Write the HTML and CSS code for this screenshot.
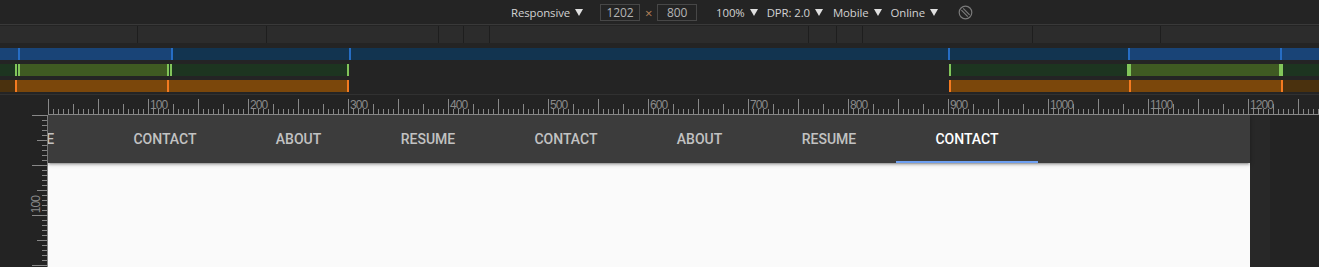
FILE: index.html
```html
<!DOCTYPE html>
<html>
<head>
<meta charset="utf-8">
<title>Device mode</title>
<link rel="stylesheet" href="styles.css">
</head>
<body>
<div class="devbar">
  <div class="toolbar">
    <span class="tb-item tb-responsive">Responsive<span class="caret"></span></span>
    <span class="dims">
      <span class="dim-box">1202</span>
      <span class="times">×</span>
      <span class="dim-box">800</span>
    </span>
    <span class="tb-item tb-zoom">100%<span class="caret"></span></span>
    <span class="tb-item tb-dpr">DPR: 2.0<span class="caret"></span></span>
    <span class="tb-item tb-mobile">Mobile<span class="caret"></span></span>
    <span class="tb-item tb-online">Online<span class="caret"></span></span>
    <svg class="rotate" width="15" height="15" viewBox="0 0 15 15">
      <circle cx="7.5" cy="7.5" r="6.3" fill="none" stroke="#7a7a7a" stroke-width="1.2"/>
      <path d="M3.4 5.2 L9.8 11.6 M5.2 3.4 L11.6 9.8" stroke="#7a7a7a" stroke-width="1.2" fill="none"/>
    </svg>
  </div>
  <div class="presets">
    <div class="preset" style="width:137px"></div>
    <div class="preset" style="width:128px"></div>
    <div class="preset" style="width:171px"></div>
    <div class="preset" style="width:24px"></div>
    <div class="preset" style="width:25px"></div>
    <div class="preset" style="width:318px"></div>
    <div class="preset" style="width:27px"></div>
    <div class="preset" style="width:25px"></div>
    <div class="preset" style="width:169px"></div>
    <div class="preset" style="width:127px"></div>
    <div class="preset preset-last"></div>
  </div>
  <div class="mq mq-max">
    <div class="s bl" style="width:18px"></div>
    <div class="s bt" style="width:2px"></div>
    <div class="s bl" style="width:151px"></div>
    <div class="s bt" style="width:2px"></div>
    <div class="s bd" style="width:176px"></div>
    <div class="s bt" style="width:2px"></div>
    <div class="s bd" style="width:597px"></div>
    <div class="s bt" style="width:2px"></div>
    <div class="s bd" style="width:178px"></div>
    <div class="s bt" style="width:2px"></div>
    <div class="s bl" style="width:150px"></div>
    <div class="s bt" style="width:2px"></div>
    <div class="s bl rest"></div>
  </div>
  <div class="mq mq-minmax">
    <div class="s gd" style="width:15px"></div>
    <div class="s gt" style="width:2px"></div>
    <div class="s gd" style="width:1px"></div>
    <div class="s gt" style="width:2px"></div>
    <div class="s gl" style="width:147px"></div>
    <div class="s gt" style="width:2px"></div>
    <div class="s gd" style="width:1px"></div>
    <div class="s gt" style="width:2px"></div>
    <div class="s gd" style="width:175px"></div>
    <div class="s gt" style="width:2px"></div>
    <div class="s e" style="width:600px"></div>
    <div class="s gt" style="width:2px"></div>
    <div class="s gd" style="width:176px"></div>
    <div class="s gt" style="width:4px"></div>
    <div class="s gl" style="width:148px"></div>
    <div class="s gt" style="width:4px"></div>
    <div class="s gd rest"></div>
  </div>
  <div class="mq mq-min">
    <div class="s od" style="width:15px"></div>
    <div class="s ot" style="width:2px"></div>
    <div class="s ol" style="width:150px"></div>
    <div class="s ot" style="width:2px"></div>
    <div class="s ol" style="width:178px"></div>
    <div class="s ot" style="width:2px"></div>
    <div class="s e" style="width:600px"></div>
    <div class="s ot" style="width:2px"></div>
    <div class="s ol" style="width:178px"></div>
    <div class="s ot" style="width:2px"></div>
    <div class="s ol" style="width:150px"></div>
    <div class="s ot" style="width:2px"></div>
    <div class="s od rest"></div>
  </div>
</div>

<div class="ruler-row">
  <div class="ruler-corner"></div>
  <div class="hruler">
    <div class="hcell"></div>
    <div class="hcell">100</div>
    <div class="hcell">200</div>
    <div class="hcell">300</div>
    <div class="hcell">400</div>
    <div class="hcell">500</div>
    <div class="hcell">600</div>
    <div class="hcell">700</div>
    <div class="hcell">800</div>
    <div class="hcell">900</div>
    <div class="hcell">1000</div>
    <div class="hcell">1100</div>
    <div class="hcell">1200</div>
  </div>
</div>

<div class="stage">
  <div class="vruler">
    <div class="vcell"><span class="vlabel">100</span></div>
    <div class="vcell"></div>
  </div>
  <div class="page">
    <nav class="tabs">
      <div class="tab-strip">
        <div class="tab tab-resume">RESUME</div>
        <div class="tab tab-contact">CONTACT</div>
        <div class="tab tab-about">ABOUT</div>
        <div class="tab tab-resume">RESUME</div>
        <div class="tab tab-contact">CONTACT</div>
        <div class="tab tab-about">ABOUT</div>
        <div class="tab tab-resume">RESUME</div>
        <div class="tab tab-contact active">CONTACT</div>
      </div>
    </nav>
    <div class="page-body"></div>
  </div>
  <div class="handle"></div>
  <div class="stage-rest"></div>
</div>
</body>
</html>
```

FILE: styles.css
```css
* {
  box-sizing: border-box;
  margin: 0;
  padding: 0;
}

body {
  width: 1319px;
  height: 267px;
  overflow: hidden;
  background: #232323;
  font-family: "Open Sans", "DejaVu Sans", sans-serif;
}

/* ---------- top device bar ---------- */
.devbar {
  background: #242424;
  height: 95px;
  padding-bottom: 2px;
  border-bottom: 1px solid #313131;
}

.toolbar {
  height: 25px;
  border-bottom: 1px solid #393939;
  display: flex;
  align-items: center;
  padding-left: 511px;
  color: #d2d2d2;
  font-size: 11.4px;
  letter-spacing: -0.1px;
  white-space: nowrap;
}

.tb-item {
  display: flex;
  align-items: center;
}

.caret {
  display: inline-block;
  width: 0;
  height: 0;
  border-left: 4px solid transparent;
  border-right: 4px solid transparent;
  border-top: 7px solid #e0e0e0;
  margin-left: 5px;
}

.dims {
  display: flex;
  align-items: center;
  margin-left: 17px;
}

.dim-box {
  width: 40px;
  height: 17px;
  border: 1px solid #474747;
  color: #b4b4b4;
  font-size: 12px;
  line-height: 15px;
  text-align: center;
}

.times {
  color: #b58158;
  font-size: 13px;
  width: 17px;
  text-align: center;
  line-height: 15px;
  padding-top: 2px;
}

.tb-zoom { margin-left: 19px; }
.tb-dpr { margin-left: 9px; }
.tb-mobile { margin-left: 10px; }
.tb-online { margin-left: 9px; }
.rotate { margin-left: 20px; }

.presets {
  margin-top: 1px;
  height: 17px;
  display: flex;
  gap: 1px;
  background: #1e1e1e;
}

.preset {
  flex: 0 0 auto;
  background: #2c2c2c;
}

.preset-last {
  flex: 1 1 auto;
}

.mq {
  display: flex;
  height: 12px;
  margin-top: 4px;
}

.mq-max {
  margin-top: 5px;
}

.s {
  flex: 0 0 auto;
  height: 100%;
}

.s.rest {
  flex: 1 1 auto;
}

.bl { background: #194477; }
.bd { background: #123450; }
.bt { background: #266dc4; }
.gl { background: #3f5a22; }
.gd { background: #1d3520; }
.gt { background: #82c55a; }
.ol { background: #7b470b; }
.od { background: #4a310e; }
.ot { background: #f47a20; }
.e { background: transparent; }

/* ---------- rulers ---------- */
.ruler-row {
  display: flex;
  height: 20px;
}

.ruler-corner {
  width: 48px;
  flex: 0 0 auto;
}

.hruler {
  flex: 1 1 auto;
  display: flex;
  overflow: hidden;
  border-bottom: 1px solid #888888;
}

.hcell {
  flex: 0 0 100px;
  height: 19px;
  padding: 4px 0 0 2px;
  color: #8a8a8a;
  font-family: "Liberation Sans", Arial, sans-serif;
  font-size: 12px;
  line-height: 12px;
  letter-spacing: -0.9px;
  background:
    linear-gradient(#888, #888) 0 100% / 1px 15px no-repeat,
    linear-gradient(#888, #888) 50px 100% / 1px 15px no-repeat,
    linear-gradient(#888, #888) 25px 100% / 1px 10px no-repeat,
    linear-gradient(#888, #888) 75px 100% / 1px 10px no-repeat,
    repeating-linear-gradient(to right, #888 0 1px, transparent 1px 5px) 0 100% / 100% 5px no-repeat;
}

.stage {
  display: flex;
  height: 152px;
  overflow: hidden;
}

.vruler {
  flex: 0 0 48px;
  border-right: 1px solid #888888;
  display: flex;
  flex-direction: column;
  overflow: hidden;
}

.vcell {
  flex: 0 0 100px;
  display: flex;
  flex-direction: column;
  justify-content: flex-end;
  padding: 0 0 2px 31px;
  background:
    linear-gradient(#888, #888) 100% 0 / 15px 1px no-repeat,
    linear-gradient(#888, #888) 100% 50px / 15px 1px no-repeat,
    linear-gradient(#888, #888) 100% 25px / 10px 1px no-repeat,
    linear-gradient(#888, #888) 100% 75px / 10px 1px no-repeat,
    repeating-linear-gradient(to bottom, #888 0 1px, transparent 1px 5px) 100% 0 / 5px 100% no-repeat;
}

.vlabel {
  writing-mode: vertical-rl;
  transform: rotate(180deg);
  color: #8a8a8a;
  font-family: "Liberation Sans", Arial, sans-serif;
  font-size: 12px;
  line-height: 11px;
  letter-spacing: -0.9px;
  width: 11px;
  background: #232323;
}

/* ---------- emulated page ---------- */
.page {
  flex: 0 0 1202px;
  display: flex;
  flex-direction: column;
  background: #fafafa;
}

.tabs {
  height: 48px;
  background: #3c3c3c;
  overflow: hidden;
  position: relative;
  z-index: 1;
  box-shadow: 0 2px 2px 0 rgba(0, 0, 0, 0.14), 0 3px 1px -2px rgba(0, 0, 0, 0.12), 0 1px 5px 0 rgba(0, 0, 0, 0.2);
}

.tab-strip {
  display: flex;
  height: 48px;
  margin-left: -88px;
}

.tab {
  flex: 0 0 auto;
  height: 48px;
  line-height: 48px;
  text-align: center;
  font-family: Roboto, "Noto Sans", sans-serif;
  font-weight: 500;
  font-size: 14px;
  color: rgba(255, 255, 255, 0.7);
  white-space: nowrap;
}

.tab-contact { width: 142px; }
.tab-about { width: 125px; }
.tab-resume { width: 134px; }

.tab.active {
  color: #ffffff;
  box-shadow: inset 0 -2px 0 #6e9ff0;
}

.page-body {
  flex: 1 1 auto;
}

.handle {
  flex: 0 0 20px;
  background: #282828;
}

.stage-rest {
  flex: 1 1 auto;
}
```
